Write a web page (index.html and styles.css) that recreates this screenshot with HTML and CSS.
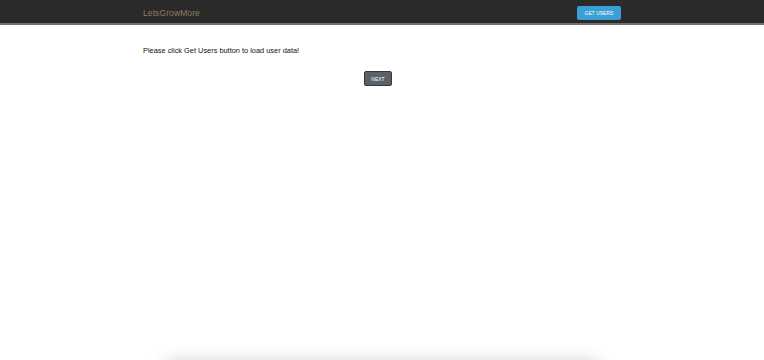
FILE: index.html
```html
<!DOCTYPE html>
<html lang="en">
<head>
    <meta charset="UTF-8">
    <meta name="viewport" content="width=device-width, initial-scale=1.0">
    <title>LetsGrowMore</title>
    <link rel="stylesheet" href="styles.css">
</head>
<body>
    <nav class="navbar">
        <div class="container nav-inner">
            <span class="brand">LetsGrowMore</span>
            <button class="btn-users">GET USERS</button>
        </div>
    </nav>

    <main class="container">
        <p class="message">Please click Get Users button to load user data!</p>
        <div class="pager">
            <button class="btn-next">NEXT</button>
        </div>
    </main>

    <div class="cards"></div>
</body>
</html>
```

FILE: styles.css
```css
body {
    font-family: "Liberation Sans", Arial, sans-serif;
    background-color: #fff;
    margin: 0;
    padding: 0;
}

.container {
    width: 478px;
    margin: 0 auto;
}

.navbar {
    background-color: #2a2a2a;
    height: 23px;
    border-bottom: 2px solid #707070;
}

.nav-inner {
    height: 100%;
    display: flex;
    align-items: center;
    justify-content: space-between;
}

.brand {
    color: #917a5e;
    font-size: 8.5px;
    letter-spacing: 0.1px;
    padding-top: 2px;
}

.btn-users {
    background-color: #3a9fd6;
    color: #fff;
    border: none;
    border-radius: 2px;
    font-family: inherit;
    font-size: 5px;
    height: 14px;
    width: 44px;
    padding: 0;
    margin-top: 2px;
    cursor: pointer;
}

.message {
    font-size: 7.4px;
    color: #111;
    margin: 21px 0 0;
}

.pager {
    display: flex;
    justify-content: center;
    margin-top: 16px;
    padding-right: 8px;
}

.btn-next {
    background-color: #5b6168;
    color: #fff;
    border: 1px solid #33373c;
    border-radius: 2px;
    font-family: inherit;
    font-size: 5px;
    height: 15px;
    width: 28px;
    padding: 0;
    cursor: pointer;
}

.cards {
    width: 430px;
    height: 20px;
    margin: 276px auto 0;
    box-shadow: 0 0 18px rgba(0, 0, 0, 0.22);
}
```
